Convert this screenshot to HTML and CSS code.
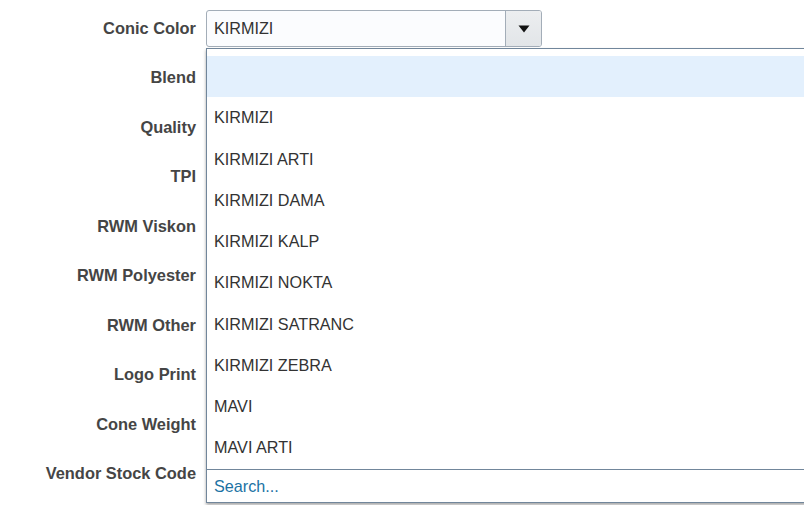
FILE: index.html
```html
<!DOCTYPE html>
<html>
<head>
<meta charset="utf-8">
<link rel="stylesheet" href="styles.css">
</head>
<body>
<div class="page">
  <form class="form">
    <div class="row">
      <label class="lbl">Conic Color</label>
      <div class="field">
        <div class="select">
          <span class="select-value">KIRMIZI</span>
          <span class="select-btn"><svg width="12" height="8" viewBox="0 0 12 8"><path d="M0.5 0.5 H11.5 L6 7.5 Z" fill="#111"/></svg></span>
        </div>
        <div class="dropdown">
          <ul class="options">
            <li class="opt hl">&nbsp;</li>
            <li class="opt">KIRMIZI</li>
            <li class="opt">KIRMIZI ARTI</li>
            <li class="opt">KIRMIZI DAMA</li>
            <li class="opt">KIRMIZI KALP</li>
            <li class="opt">KIRMIZI NOKTA</li>
            <li class="opt">KIRMIZI SATRANC</li>
            <li class="opt">KIRMIZI ZEBRA</li>
            <li class="opt">MAVI</li>
            <li class="opt">MAVI ARTI</li>
          </ul>
          <div class="search">Search...</div>
        </div>
      </div>
    </div>
    <div class="row"><label class="lbl">Blend</label><div class="field"></div></div>
    <div class="row"><label class="lbl">Quality</label><div class="field"></div></div>
    <div class="row"><label class="lbl">TPI</label><div class="field"></div></div>
    <div class="row"><label class="lbl">RWM Viskon</label><div class="field"></div></div>
    <div class="row"><label class="lbl">RWM Polyester</label><div class="field"></div></div>
    <div class="row"><label class="lbl">RWM Other</label><div class="field"></div></div>
    <div class="row"><label class="lbl">Logo Print</label><div class="field"></div></div>
    <div class="row"><label class="lbl">Cone Weight</label><div class="field"></div></div>
    <div class="row"><label class="lbl">Vendor Stock Code</label><div class="field"></div></div>
  </form>
</div>
</body>
</html>
```

FILE: styles.css
```css
* { box-sizing: border-box; }
html, body {
  margin: 0;
  padding: 0;
  background: #ffffff;
  font-family: "Liberation Sans", Arial, sans-serif;
  font-size: 16px;
  color: #333333;
  overflow: hidden;
}
.page {
  width: 804px;
  height: 505px;
  overflow: hidden;
}
.form {
  display: flex;
  flex-direction: column;
  row-gap: 12.5px;
  padding-top: 10px;
  margin: 0;
}
.row {
  display: grid;
  grid-template-columns: 196px 1fr;
  column-gap: 10px;
  height: 37px;
  align-items: center;
}
.lbl {
  text-align: right;
  font-weight: bold;
  font-size: 16.4px;
  color: #454545;
  white-space: nowrap;
  margin-top: -1px;
}
.field {
  position: relative;
  height: 37px;
}
.select {
  display: flex;
  width: 336px;
  height: 37px;
  border: 1px solid #a3adb8;
  border-radius: 3px;
  background: #fbfcfe;
  overflow: hidden;
}
.select-value {
  flex: 1;
  display: flex;
  align-items: center;
  padding-left: 7px;
  font-size: 16.2px;
  color: #333333;
}
.select-btn {
  width: 36px;
  display: flex;
  align-items: center;
  justify-content: center;
  border-left: 1px solid #a3adb8;
  background: linear-gradient(#eceef0, #e2e5e8);
  padding-top: 1px;
}
.dropdown {
  position: absolute;
  left: 0;
  top: 38px;
  width: 640px;
  height: 455px;
  background: #ffffff;
  border: 1px solid #71869b;
  border-right: none;
  box-shadow: 0 2px 3px rgba(0, 0, 0, 0.35);
  z-index: 5;
  display: flex;
  flex-direction: column;
}
.options {
  list-style: none;
  margin: 0;
  padding: 7px 0 0 0;
  flex: 1;
}
.opt {
  height: 41.25px;
  display: flex;
  align-items: center;
  padding-left: 7px;
  font-size: 16.2px;
  color: #333333;
  white-space: nowrap;
}
.opt.hl {
  background: #e3f0fd;
}
.search {
  height: 33px;
  border-top: 1px solid #71869b;
  display: flex;
  align-items: center;
  padding-left: 7px;
  font-size: 16.2px;
  color: #1b72a4;
}
```
